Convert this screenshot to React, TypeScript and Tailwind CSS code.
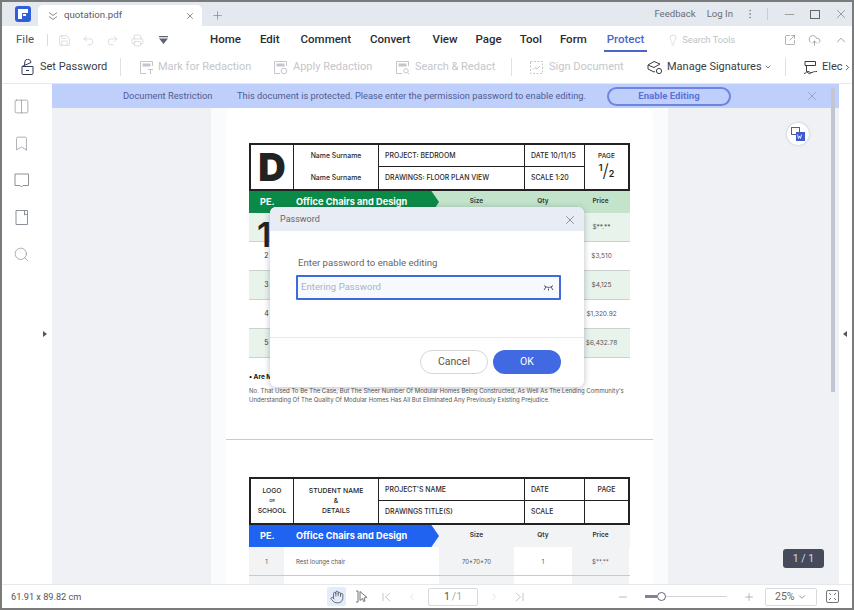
import { Bookmark, ChevronDown, ChevronLeft, ChevronRight, ChevronUp, CloudUpload, Columns2, Hand, Lightbulb, Minus, MoreVertical, Plus, Printer, Redo2, Save, Search, SquareArrowOutUpRight, Undo2, X } from "lucide-react"

const DOC_FONT = "font-['Inter',sans-serif]"

const rows = [
  { n: "", price: "$**.**", tint: true },
  { n: "2", price: "$3,510", tint: false },
  { n: "3", price: "$4,125", tint: true },
  { n: "4", price: "$1,320.92", tint: false },
  { n: "5", price: "$6,432.78", tint: true },
]

const RedactIcon = ({ kind }: { kind: "mark" | "apply" | "search" | "sign" }) => (
  <svg width="15" height="15" viewBox="0 0 15 15" fill="none" stroke="#c4c6cc" strokeWidth="1" className="shrink-0">
    {kind === "sign" ? (
      <>
        <path d="M1.5 1.5h12v12h-12z" strokeDasharray="2 1.5" />
        <path d="M4 9.5l2-2 2 1.5 3-3" />
      </>
    ) : (
      <>
        <path d="M13.5 6V1.5h-12v12H7" />
        <rect x="3.5" y="3.5" width="8" height="3" fill="#c4c6cc" stroke="none" />
        {kind === "mark" && <path d="M9 9.5h5M11.5 9.5v4.5" />}
        {kind === "apply" && <circle cx="11" cy="11" r="2.8" />}
        {kind === "search" && <path d="M11 13a2.2 2.2 0 1 0 0-4.4 2.2 2.2 0 0 0 0 4.4zM12.6 12.6l1.6 1.6" />}
      </>
    )}
  </svg>
)

const ToolDivider = ({ className }: { className: string }) => <div className={`h-[18px] w-px bg-[#dfe1e6] shrink-0 ${className}`} />

const TitleBar = () => (
  <div className="h-6 shrink-0 flex items-end bg-[#e4e8ef] relative">
    <div className="w-9 h-full flex items-center pl-[13px]">
      <div className="w-4 h-4 rounded-[3px] bg-[#2f5fd8] flex items-center justify-center">
        <svg width="10" height="10" viewBox="0 0 10 10" fill="#fff">
          <path d="M0 0h10v4H4v6H0z" />
          <path d="M5 5h3v2H5z" />
        </svg>
      </div>
    </div>
    <div className="w-[164px] h-[21px] bg-white rounded-t-[5px] flex items-center pl-[10px] pr-[7px] text-[9.700px] text-[#5a5d66]">
      <svg width="10" height="10" viewBox="0 0 10 10" fill="none" stroke="#8a8d96" strokeWidth="1">
        <path d="M1 1.5l4 3 4-3M1 5.5l4 3 4-3" />
      </svg>
      <span className="ml-[6px] flex-1">quotation.pdf</span>
      <X size={10} strokeWidth={1.6} className="text-[#555]" />
    </div>
    <Plus size={13} strokeWidth={1.2} className="ml-[9px] mb-[4px] text-[#777b85]" />
    <div className="ml-auto h-full flex items-center text-[9.600px] text-[#6a6d76]">
      <span>Feedback</span>
      <span className="ml-[11px]">Log In</span>
      <MoreVertical size={12} strokeWidth={1.2} className="ml-[11px] text-[#777]" />
      <div className="ml-[11px] w-px h-3 bg-[#c8ccd4]" />
      <Minus size={15} strokeWidth={0.9} className="ml-[14px] text-[#666]" />
      <div className="ml-[13px] w-[10px] h-[9px] border border-[#666]" />
      <X size={14} strokeWidth={1} className="ml-[14px] mr-[4px] text-[#666]" />
    </div>
  </div>
)

const MenuBar = () => (
  <div className="h-[26px] shrink-0 flex items-center pt-[2px] bg-white text-[11.500px] font-medium text-[#2a2c33] whitespace-nowrap">
    <span className="ml-[14px] font-normal text-[#555]">File</span>
    <div className="ml-[13px] w-px h-3 bg-[#d8dae0]" />
    <Save size={13} strokeWidth={1} className="ml-[10px] text-[#c2c4ca]" />
    <Undo2 size={13} strokeWidth={1} className="ml-[11px] text-[#c2c4ca]" />
    <Redo2 size={13} strokeWidth={1} className="ml-[11px] text-[#c2c4ca]" />
    <Printer size={13} strokeWidth={1} className="ml-[12px] text-[#c2c4ca]" />
    <svg width="9" height="8" viewBox="0 0 9 8" className="ml-[15px]" fill="#5f6370">
      <path d="M0 0h9v1.2H0zM0 2.5h9L4.5 8z" />
    </svg>
    <span className="ml-[42px]">Home</span>
    <span className="ml-[19px]">Edit</span>
    <span className="ml-[21px]">Comment</span>
    <span className="ml-[19px]">Convert</span>
    <span className="ml-[22px]">View</span>
    <span className="ml-[18px]">Page</span>
    <span className="ml-[18px]">Tool</span>
    <span className="ml-[18px]">Form</span>
    <span className="ml-[20px] relative text-[#4a67c8]">
      Protect
      <span className="absolute -left-[3px] -right-[3px] -bottom-[3px] h-[2px] bg-[#4a67c8]" />
    </span>
    <Lightbulb size={12} strokeWidth={1} className="ml-[23px] text-[#b8bac0]" />
    <span className="ml-[3px] w-[52px] text-[9.200px] font-normal text-[#c0c2c8]">Search Tools</span>
    <SquareArrowOutUpRight size={12} strokeWidth={1} className="ml-[50px] text-[#666]" />
    <CloudUpload size={13} strokeWidth={1} className="ml-[12px] text-[#666]" />
    <ChevronUp size={14} strokeWidth={1} className="ml-[13px] text-[#666]" />
  </div>
)

const ToolBar = () => (
  <div className="h-8 shrink-0 flex items-center pb-[1px] bg-white border-b border-[#e6e8ec] text-[11px] text-[#3a3c44] overflow-hidden whitespace-nowrap">
    <svg width="15" height="17" viewBox="0 0 15 17" fill="none" stroke="#333a55" strokeWidth="1" className="ml-[18px] shrink-0">
      <path d="M2 7.500 11 3.500 10.500 2a3 3 0 0 0-5.500 0L4.500 6M2 7.500h11v7a1 1 0 0 1-1 1H3a1 1 0 0 1-1-1zM6 11.500h3" />
    </svg>
    <span className="ml-[5px] w-[67px]">Set Password</span>
    <ToolDivider className="ml-[13px]" />
    <div className="ml-[18px]"><RedactIcon kind="mark" /></div>
    <span className="ml-[4px] w-[94px] text-[#c4c6cc]">Mark for Redaction</span>
    <div className="ml-[21px]"><RedactIcon kind="apply" /></div>
    <span className="ml-[5px] w-[81px] text-[#c4c6cc]">Apply Redaction</span>
    <div className="ml-[21px]"><RedactIcon kind="search" /></div>
    <span className="ml-[5px] w-[81px] text-[#c4c6cc]">Search & Redact</span>
    <ToolDivider className="ml-[15px]" />
    <div className="ml-[17px]"><RedactIcon kind="sign" /></div>
    <span className="ml-[5px] w-[76px] text-[#c4c6cc]">Sign Document</span>
    <svg width="16" height="15" viewBox="0 0 16 15" fill="none" stroke="#3a3c44" strokeWidth="1" className="ml-[22px] shrink-0">
      <path d="M1 5l6-3.500 6 2.500-6 3.500zM1 9l6 3 1-.5M1 5v4" />
      <circle cx="12" cy="11" r="2.600" />
    </svg>
    <span className="ml-[4px] w-[95px]">Manage Signatures</span>
    <ChevronDown size={8} strokeWidth={2} className="ml-[2px] shrink-0" />
    <ToolDivider className="ml-[13px]" />
    <svg width="15" height="15" viewBox="0 0 15 15" fill="none" stroke="#3a3c44" strokeWidth="1" className="ml-[17px] shrink-0">
      <path d="M2 1.500h10.500v4H2zM3.500 5.500v6l3 2.500 2-2M1 13.500c2 0 2-2 4-2s2 2 4 1 3-1 5-1" />
    </svg>
    <span className="ml-[4px] w-[21px]">Elec</span>
    <ChevronRight size={9} strokeWidth={2.2} className="shrink-0" />
  </div>
)

const SideBar = () => (
  <div className="w-[50px] shrink-0 bg-white relative">
    <div className="w-[38px] pt-[14px] flex flex-col items-center gap-[20px] text-[#80848e]">
      <Columns2 size={17} strokeWidth={0.9} />
      <Bookmark size={17} strokeWidth={0.9} />
      <svg width="17" height="17" viewBox="0 0 17 17" fill="none" stroke="currentColor" strokeWidth="0.9">
        <path d="M2 2h13.500v11.500H10L8.500 15 7 13.500H2z" />
      </svg>
      <svg width="17" height="17" viewBox="0 0 17 17" fill="none" stroke="currentColor" strokeWidth="0.9">
        <path d="M3 1.500h11.500v14H3zM11.500 1.500V6l1.500-1 1.500 1" />
      </svg>
      <Search size={17} strokeWidth={0.9} />
    </div>
    <div className="absolute left-[41px] top-[247px] w-0 h-0 border-y-[3px] border-y-transparent border-l-[4px] border-l-[#555]" />
  </div>
)

const TableCell = ({ children, className = "" }: { children: React.ReactNode; className?: string }) => (
  <div className={`flex items-center pt-[1px] text-[6.900px] font-medium text-[#2a2a2a] ${className}`}>{children}</div>
)

const FirstPage = () => (
  <div className={`relative h-[332px] bg-white rounded-t-lg border-b border-[#c8cad0] px-[23px] pt-[35px] ${DOC_FONT}`}>
    <div className="h-[48px] border-2 border-[#222] grid grid-cols-[43px_85px_146px_60px_1fr] grid-rows-2">
      <div className="row-span-2 flex items-center justify-center border-r border-[#222] text-[38px] leading-none font-black text-[#222]">D</div>
      <TableCell className="justify-center border-r border-[#222]">Name Surname</TableCell>
      <TableCell className="pl-[6px] border-r border-b border-[#222]">PROJECT: BEDROOM</TableCell>
      <TableCell className="pl-[6px] border-r border-b border-[#222]">DATE 10/11/15</TableCell>
      <div className="row-span-2 flex flex-col items-center text-[#222]">
        <span className="mt-[7px] text-[6.500px] font-medium">PAGE</span>
        <span className="mt-[2px] flex items-center text-[9px] leading-[14px] font-semibold">
          <span className="-translate-y-[3px]">1</span>
          <span className="text-[18px] font-light">/</span>
          <span className="translate-y-[3px]">2</span>
        </span>
      </div>
      <TableCell className="justify-center border-r border-[#222]">Name Surname</TableCell>
      <TableCell className="pl-[6px] border-r border-[#222]">DRAWINGS: FLOOR PLAN VIEW</TableCell>
      <TableCell className="pl-[6px] border-r border-[#222]">SCALE 1:20</TableCell>
    </div>
    <div className="h-[22px] bg-[#c3e3cb] grid grid-cols-[35px_155px_75px_58px_57px] items-center text-[6.500px] font-semibold text-[#333]">
      <div className="col-span-2 h-full bg-[#0b8a47] [clip-path:polygon(0_0,96%_0,100%_50%,96%_100%,0_100%)] flex items-center text-white text-[9.200px] font-bold">
        <span className="ml-[11px] w-[36px]">PE.</span>
        <span>Office Chairs and Design</span>
      </div>
      <span className="text-center">Size</span>
      <span className="text-center">Qty</span>
      <span className="text-center">Price</span>
    </div>
    {rows.map((r) => (
      <div
        key={r.price}
        className={`h-[29px] flex items-center pt-[1px] border-b border-[#c9d2cd] text-[6.500px] text-[#555] ${r.tint ? "bg-[#e8f3ec]" : "bg-white"}`}
      >
        <span className="w-[35px] text-center text-[7px] text-[#333]">{r.n}</span>
        <span className="ml-auto w-[57px] text-center">{r.price}</span>
      </div>
    ))}
    <div className="absolute left-[31px] top-[112px] h-[30px] text-[34px] leading-[30px] font-semibold text-[#222]">1</div>
    <p className="mt-[15px] text-[6.500px] font-bold text-[#111]">• Are Modular Homes</p>
    <p className="mt-[3px] text-[6px] leading-[9px] text-[#555] whitespace-nowrap">
      No. That Used To Be The Case, But The Sheer Number Of Modular Homes Being Constructed, As Well As The Lending Community's
      <br />
      Understanding Of The Quality Of Modular Homes Has All But Eliminated Any Previously Existing Prejudice.
    </p>
  </div>
)

const SecondPage = () => (
  <div className={`bg-white px-[23px] pt-[37px] ${DOC_FONT}`}>
    <div className="h-[48px] border-2 border-[#222] grid grid-cols-[43px_85px_146px_60px_1fr] grid-rows-2">
      <div className="row-span-2 flex flex-col items-center justify-center border-r border-[#222] text-[6.800px] leading-[10px] font-medium text-[#222]">
        <span>LOGO</span>
        <span className="text-[4px]">OR</span>
        <span>SCHOOL</span>
      </div>
      <div className="row-span-2 flex flex-col items-center justify-center border-r border-[#222] text-[6.800px] leading-[10px] font-medium text-[#222]">
        <span>STUDENT NAME</span>
        <span>&</span>
        <span>DETAILS</span>
      </div>
      <TableCell className="pl-[6px] border-r border-b border-[#222]">PROJECT'S NAME</TableCell>
      <TableCell className="pl-[6px] border-r border-b border-[#222]">DATE</TableCell>
      <TableCell className="justify-center border-b border-[#222]">PAGE</TableCell>
      <TableCell className="pl-[6px] border-r border-[#222]">DRAWINGS TITLE(S)</TableCell>
      <TableCell className="pl-[6px] border-r border-[#222]">SCALE</TableCell>
      <div />
    </div>
    <div className="h-[22px] bg-[#f2f3f5] grid grid-cols-[35px_155px_75px_58px_57px] items-center text-[6.500px] font-semibold text-[#333]">
      <div className="col-span-2 h-full bg-[#1f63f0] [clip-path:polygon(0_0,96%_0,100%_50%,96%_100%,0_100%)] flex items-center text-white text-[9.200px] font-bold">
        <span className="ml-[11px] w-[36px]">PE.</span>
        <span>Office Chairs and Design</span>
      </div>
      <span className="text-center">Size</span>
      <span className="text-center">Qty</span>
      <span className="text-center">Price</span>
    </div>
    <div className="h-[29px] grid grid-cols-[35px_155px_75px_58px_57px] items-center border-b border-[#c8cad0] text-[6px] text-[#555]">
      <span className="h-full flex items-center justify-center bg-[#f2f3f5]">1</span>
      <span className="pl-[12px]">Rest lounge chair</span>
      <span className="h-full flex items-center justify-center bg-[#f2f3f5]">70*70*70</span>
      <span className="text-center">1</span>
      <span className="h-full flex items-center justify-center bg-[#f2f3f5]">$**.**</span>
    </div>
    <div className="h-[29px] grid grid-cols-[35px_155px_75px_58px_57px]">
      <span className="bg-[#f2f3f5]" />
      <span />
      <span className="bg-[#f2f3f5]" />
      <span />
      <span className="bg-[#f2f3f5]" />
    </div>
  </div>
)

const Workspace = () => (
  <div className="flex-1 min-w-0 relative flex flex-col">
    <div className="h-6 shrink-0 bg-[#bfcffb] flex items-center text-[9.300px] text-[#4f5c92] whitespace-nowrap">
      <span className="ml-[71px] w-[90px]">Document Restriction</span>
      <span className="ml-[24px] w-[347px]">This document is protected. Please enter the permission password to enable editing.</span>
      <button className="ml-[23px] w-[124px] h-[19px] rounded-full border-2 border-[#6d85e0] text-[9.600px] font-bold text-[#5a72d8]">Enable Editing</button>
      <X size={14} strokeWidth={1} className="ml-[74px] text-[#7c88a8]" />
    </div>
    <div className="flex-1 min-h-0 bg-[#eff1f5] overflow-hidden">
      <div className="ml-[159px] w-[457px] h-full bg-[#fafbfc] px-[15px]">
        <FirstPage />
        <SecondPage />
      </div>
    </div>
    <div className="absolute left-[735px] top-[39px] w-[22px] h-[22px] rounded-full bg-white shadow-[0_0_3px_rgba(0,0,0,0.2)] flex items-center justify-center">
      <svg width="14" height="14" viewBox="0 0 14 14" fill="none">
        <rect x="0.500" y="0.500" width="8" height="7" stroke="#5a5f78" fill="#fff" />
        <rect x="5" y="5" width="9" height="9" fill="#3f5bd0" />
        <path d="M6.500 7.500l1 4 1-2.500 1 2.500 1-4" stroke="#fff" strokeWidth="0.800" />
      </svg>
    </div>
    <div className="absolute left-[779px] top-[4px] w-[4px] h-[304px] bg-[#c2c6d2]" />
    <div className="absolute left-[731px] top-[465px] w-[41px] h-[19px] rounded-[3px] bg-[#464a5a] flex items-center justify-center text-[10.500px] text-[#d8dae0]">1 / 1</div>
  </div>
)

const StatusBar = () => (
  <div className="h-6 shrink-0 bg-white border-t border-[#e6e8ec] flex items-center text-[#9a9da6]">
    <span className="ml-[9px] w-[316px] text-[9.200px] text-[#555]">61.91 x 89.82 cm</span>
    <div className="w-[19px] h-[19px] rounded-[2px] bg-[#e3ecfb] flex items-center justify-center">
      <Hand size={14} strokeWidth={1.2} className="text-[#3a3c44]" />
    </div>
    <svg width="13" height="13" viewBox="0 0 13 13" fill="none" stroke="#666" strokeWidth="0.900" className="ml-[9px]">
      <path d="M1 1h2v11H1M5 1.500l7 6-3 .5 1 3-1.500.5-1-3-2.500 2z" />
    </svg>
    <svg width="10" height="10" viewBox="0 0 10 10" fill="none" stroke="#c4c6cc" className="ml-[14px]">
      <path d="M1 1v8M8 1L3.500 5 8 9" />
    </svg>
    <ChevronLeft size={12} strokeWidth={1} className="ml-[14px] text-[#c4c6cc]" />
    <div className="ml-[10px] w-[50px] h-[18px] border border-[#d8dae0] rounded-[2px] flex items-center justify-center text-[10.500px] text-[#555]">
      1<span className="ml-[2px] text-[#aaa]">/1</span>
    </div>
    <ChevronRight size={12} strokeWidth={1} className="ml-[10px] text-[#c4c6cc]" />
    <svg width="10" height="10" viewBox="0 0 10 10" fill="none" stroke="#c4c6cc" className="ml-[14px]">
      <path d="M9 1v8M2 1l4.500 4L2 9" />
    </svg>
    <Minus size={12} strokeWidth={1} className="ml-[93px] text-[#777]" />
    <div className="ml-[16px] w-[82px] h-[1px] bg-[#d0d2d8] relative">
      <div className="absolute left-0 -top-[1px] w-[12px] h-[3px] bg-[#80849a]" />
      <div className="absolute left-[12px] -top-[4px] w-[9px] h-[9px] rounded-full bg-white border border-[#606478]" />
    </div>
    <Plus size={12} strokeWidth={1} className="ml-[16px] text-[#777]" />
    <div className="ml-[10px] w-[52px] h-[18px] border border-[#d8dae0] rounded-[2px] flex items-center justify-between px-[9px] text-[10.500px] text-[#666]">
      25%
      <ChevronDown size={10} strokeWidth={1.4} className="text-[#555]" />
    </div>
    <svg width="13" height="13" viewBox="0 0 13 13" fill="none" stroke="#666" strokeWidth="0.900" className="ml-[9px]">
      <rect x="0.500" y="0.500" width="12" height="12" rx="1.500" />
      <path d="M3 3l2 2M10 3L8 5M3 10l2-2M10 10L8 8" />
    </svg>
  </div>
)

const PasswordDialog = () => (
  <div className="absolute left-[268px] top-[205px] w-[314px] h-[180px] rounded-md bg-white shadow-[0_1px_6px_rgba(60,70,90,0.35)] flex flex-col text-[9.600px]">
    <div className="h-6 shrink-0 rounded-t-md bg-[#e8ecf4] flex items-center justify-between pt-[1px] pl-[10px] pr-[7px] text-[9px] text-[#666]">
      Password
      <X size={14} strokeWidth={1} className="text-[#555]" />
    </div>
    <div className="flex-1 pl-[26px] pr-[23px] pt-[25px]">
      <p className="ml-[2px] leading-[14px] text-[#666]">Enter password to enable editing</p>
      <div className="mt-[5px] h-[25px] border-2 border-[#4169d8] rounded-[1px] bg-[#f6f9fe] flex items-center justify-between pl-[3px] pr-[5px] text-[#b0b3bc]">
        Entering Password
        <svg width="11" height="7" viewBox="0 0 11 7" fill="none" stroke="#444" strokeWidth="0.900">
          <path d="M1 1.500c2.500 2.500 6.500 2.500 9 0M1 6l2-3M10 6L8 3M5.500 4.500v2" />
        </svg>
      </div>
    </div>
    <div className="h-[50px] shrink-0 border-t border-[#e8e9ec] flex items-start justify-end gap-[5px] pt-[12px] pr-[23px] text-[10.500px]">
      <button className="w-[68px] h-[24px] rounded-full border border-[#d4d6dc] bg-white text-[#555]">Cancel</button>
      <button className="w-[68px] h-[24px] rounded-full bg-[#4169e1] text-white">OK</button>
    </div>
  </div>
)

export default function App() {
  return (
    <div className="w-[854px] h-[610px] relative flex flex-col overflow-hidden border-2 border-[#7b7b7b] bg-white font-['Roboto',sans-serif]">
      <TitleBar />
      <MenuBar />
      <ToolBar />
      <div className="flex-1 min-h-0 flex">
        <SideBar />
        <Workspace />
        <div className="w-[13px] shrink-0 bg-white relative">
          <div className="absolute left-[4px] top-[247px] w-0 h-0 border-y-[3px] border-y-transparent border-r-[4px] border-r-[#555]" />
        </div>
      </div>
      <StatusBar />
      <PasswordDialog />
    </div>
  )
}
